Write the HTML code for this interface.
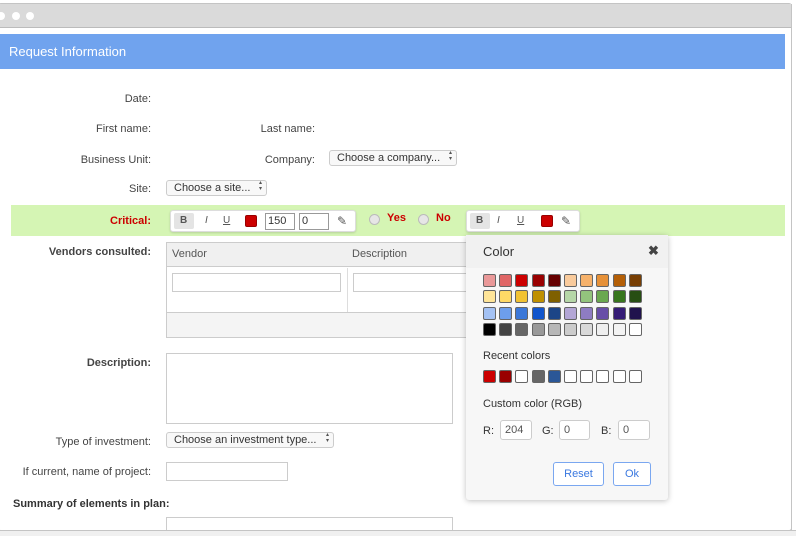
<!DOCTYPE html>
<html style="width:796px;height:536px;overflow:hidden"><head><meta charset="utf-8"><style>
*{box-sizing:border-box;margin:0;padding:0}
body{width:796px;height:536px;background:#fff;font-family:"Liberation Sans",Arial,sans-serif;font-size:11px;color:#333;position:relative;overflow:hidden}
.a{position:absolute}
.lbl{position:absolute;text-align:right;white-space:nowrap;color:#444}
.b{font-weight:bold}
.sel{position:absolute;height:16px;border:1px solid #ccc;border-radius:3px;background:#f8f8f8;font-size:11px;padding:1px 0 0 7px;color:#333;white-space:nowrap}
.sel:after{content:"\25B4\A\25BE";white-space:pre;position:absolute;right:4px;top:-1px;font-size:6px;line-height:6px;color:#555}
.inp{position:absolute;border:1px solid #ccc;background:#fff}
.tb{position:absolute;height:22px;border:1px solid #ddd;border-radius:3px;background:#fff;box-shadow:0 1px 2px rgba(0,0,0,.15)}
.tb span{position:absolute;top:4px;font-size:10px;color:#555}
.sw{position:absolute;width:13px;height:13px;border:1px solid #666;border-radius:2px}
.btn{position:absolute;height:24px;border:1px solid #7aa7f0;border-radius:3px;background:#fff;color:#3a78e0;text-align:center;line-height:22px;font-size:11px}
</style></head><body>
<div class="a" style="left:-2px;top:3px;width:794px;height:528px;border:1px solid #c4c4c4;border-radius:3px"></div>
<div class="a" style="left:0;top:4px;width:791px;height:24px;background:#dadada;border-bottom:1px solid #bbb"></div>
<div class="a" style="left:-3px;top:12px;width:8px;height:8px;border-radius:50%;background:#fff"></div>
<div class="a" style="left:12px;top:12px;width:8px;height:8px;border-radius:50%;background:#fff"></div>
<div class="a" style="left:26px;top:12px;width:8px;height:8px;border-radius:50%;background:#fff"></div>
<div class="a" style="left:0;top:34px;width:785px;height:35px;background:#70a3ee;color:#fff;font-size:13px;padding:10px 0 0 9px">Request Information</div>

<div class="lbl" style="right:645px;top:93px">Date:</div>
<div class="lbl" style="right:645px;top:123px">First name:</div>
<div class="lbl" style="right:481px;top:123px">Last name:</div>
<div class="lbl" style="right:645px;top:154px">Business Unit:</div>
<div class="lbl" style="right:481px;top:154px">Company:</div>
<div class="sel" style="left:329px;top:150px;width:128px">Choose a company...</div>
<div class="lbl" style="right:645px;top:183px">Site:</div>
<div class="sel" style="left:166px;top:180px;width:101px">Choose a site...</div>

<div class="a" style="left:11px;top:205px;width:774px;height:31px;background:#d5f5b4"></div>
<div class="lbl b" style="right:645px;top:215px;color:#c00">Critical:</div>
<div class="tb" style="left:170px;top:210px;width:186px">
 <div class="a" style="left:3px;top:2px;width:20px;height:16px;background:#e4e4e4;border-radius:2px"></div>
 <span style="left:9px;font-weight:bold">B</span><span style="left:34px;font-style:italic">I</span><span style="left:52px;text-decoration:underline">U</span>
 <div class="a" style="left:74px;top:4px;width:12px;height:12px;background:#c00;border-radius:2px;border:1px solid #900"></div>
 <div class="inp" style="left:94px;top:2px;width:30px;height:17px;border-color:#999;font-size:11px;padding:1px 2px">150</div>
 <div class="inp" style="left:128px;top:2px;width:30px;height:17px;border-color:#999;font-size:11px;padding:1px 2px">0</div>
 <span style="left:166px;top:3px;font-size:12px">&#9998;</span>
</div>
<div class="a" style="left:369px;top:214px;width:11px;height:11px;border-radius:50%;background:#e6e6e6;border:1px solid #bbb"></div>
<div class="a b" style="left:387px;top:212px;color:#c00">Yes</div>
<div class="a" style="left:418px;top:214px;width:11px;height:11px;border-radius:50%;background:#e6e6e6;border:1px solid #bbb"></div>
<div class="a b" style="left:436px;top:212px;color:#c00">No</div>
<div class="tb" style="left:466px;top:210px;width:114px">
 <div class="a" style="left:3px;top:2px;width:20px;height:16px;background:#e4e4e4;border-radius:2px"></div>
 <span style="left:9px;font-weight:bold">B</span><span style="left:30px;font-style:italic">I</span><span style="left:50px;text-decoration:underline">U</span>
 <div class="a" style="left:74px;top:4px;width:12px;height:12px;background:#c00;border-radius:2px;border:1px solid #900"></div>
 <span style="left:94px;top:3px;font-size:12px">&#9998;</span>
</div>

<div class="lbl b" style="right:645px;top:246px">Vendors consulted:</div>
<div class="a" style="left:166px;top:242px;width:320px;height:96px;border:1px solid #ccc;background:#fff"></div>
<div class="a" style="left:167px;top:243px;width:320px;height:24px;background:#f0f0f0;border-bottom:1px solid #ccc"></div>
<div class="a" style="left:172px;top:248px;color:#555">Vendor</div>
<div class="a" style="left:352px;top:248px;color:#555">Description</div>
<div class="a" style="left:347px;top:268px;width:1px;height:45px;background:#ddd"></div>
<div class="inp" style="left:172px;top:273px;width:169px;height:19px"></div>
<div class="inp" style="left:353px;top:273px;width:120px;height:19px"></div>
<div class="a" style="left:167px;top:312px;width:320px;height:25px;background:#f4f4f4;border-top:1px solid #ccc"></div>

<div class="lbl b" style="right:645px;top:357px">Description:</div>
<div class="inp" style="left:166px;top:353px;width:287px;height:71px"></div>
<div class="lbl" style="right:645px;top:436px">Type of investment:</div>
<div class="sel" style="left:166px;top:432px;width:168px">Choose an investment type...</div>
<div class="lbl" style="right:645px;top:466px">If current, name of project:</div>
<div class="inp" style="left:166px;top:462px;width:122px;height:19px"></div>
<div class="a b" style="left:13px;top:498px">Summary of elements in plan:</div>
<div class="inp" style="left:166px;top:517px;width:287px;height:14px;border-bottom:none"></div>
<div class="a" style="left:0;top:530px;width:796px;height:6px;background:#f0f0f0;border-top:1px solid #c4c4c4"></div>
<div class="a" style="left:791px;top:4px;width:1px;height:527px;background:#c4c4c4"></div>

<div class="a" style="left:466px;top:235px;width:202px;height:265px;background:#f7f7f7;border-radius:3px;box-shadow:0 1px 6px rgba(0,0,0,.25)">
 <div class="a" style="left:0;top:0;width:202px;height:33px;background:#f1f1f1"></div>
 <div class="a" style="left:17px;top:9px;font-size:13px;color:#333">Color</div>
 <div class="a b" style="left:182px;top:8px;font-size:13px;color:#444">&#10006;</div>
 <div class="a" style="left:17px;top:115px;color:#333">Recent colors</div>
 <div class="a" style="left:17px;top:163px;color:#333">Custom color (RGB)</div>
 <div class="a" style="left:17px;top:190px">R:</div>
 <div class="inp" style="left:34px;top:185px;width:32px;height:20px;border-radius:3px;padding:3px 4px;color:#555">204</div>
 <div class="a" style="left:76px;top:190px">G:</div>
 <div class="inp" style="left:93px;top:185px;width:31px;height:20px;border-radius:3px;padding:3px 4px;color:#555">0</div>
 <div class="a" style="left:135px;top:190px">B:</div>
 <div class="inp" style="left:152px;top:185px;width:32px;height:20px;border-radius:3px;padding:3px 4px;color:#555">0</div>
 <div class="btn" style="left:87px;top:227px;width:51px">Reset</div>
 <div class="btn" style="left:147px;top:227px;width:38px">Ok</div>
</div>
<div id="sw"></div>
<script>
var c=[["#ea9999","#e06666","#cc0000","#990000","#660000","#f9cb9c","#f6b26b","#e69138","#b45f06","#783f04"],
["#ffe599","#ffd966","#f1c232","#bf9000","#7f6000","#b6d7a8","#93c47d","#6aa84f","#38761d","#274e13"],
["#a4c2f4","#6d9eeb","#3c78d8","#1155cc","#1c4587","#b4a7d6","#8e7cc3","#674ea7","#351c75","#20124d"],
["#000000","#434343","#666666","#999999","#b7b7b7","#cccccc","#d9d9d9","#efefef","#f3f3f3","#ffffff"]];
var r=["#cc0000","#990000","#ffffff","#666666","#2b5797","#ffffff","#ffffff","#ffffff","#ffffff","#ffffff"];
var h="";
for(var i=0;i<4;i++)for(var j=0;j<10;j++)h+='<div class="sw" style="left:'+(483+j*16.2)+'px;top:'+(274+i*16.4)+'px;background:'+c[i][j]+'"></div>';
for(var j=0;j<10;j++)h+='<div class="sw" style="left:'+(483+j*16.2)+'px;top:370px;background:'+r[j]+'"></div>';
document.getElementById("sw").innerHTML=h;
</script>
</body></html>
